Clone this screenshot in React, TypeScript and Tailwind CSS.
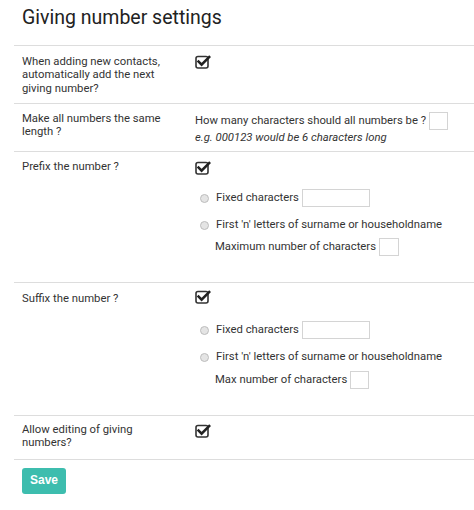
import React from "react";

function CheckIcon() {
  return (
    <svg width="16" height="14" viewBox="0 0 16 14" className="block">
      <rect x="1" y="1.5" width="12" height="11.5" rx="2" fill="none" stroke="#333" strokeWidth="1.6" />
      <path d="M3.6 6.6 L6.6 9.6 L14.2 2" fill="none" stroke="#222" strokeWidth="2.6" strokeLinecap="square" />
    </svg>
  );
}

function Radio() {
  return <span className="inline-block w-[9px] h-[9px] rounded-full border border-[#bdbdbd] bg-[#e4e4e4] shrink-0" />;
}

function Box({ w, h = "h-[18px]" }: { w: string; h?: string }) {
  return <span className={`inline-block border border-[#d4d4d4] bg-white ${w} ${h}`} />;
}

function AffixOptions({ maxLabel, maxBox, firstGap, maxGap }: { maxLabel: string; maxBox: string; firstGap: string; maxGap: string }) {
  return (
    <div className="flex flex-col pl-[5px]">
      <div className="flex items-center gap-[7px] h-[18px]">
        <Radio />
        <span className="flex items-center gap-[3px]">
          Fixed characters <Box w="w-[68px]" />
        </span>
      </div>
      <div className={`flex items-center gap-[7px] h-[14px] ${firstGap}`}>
        <Radio />
        <span>First 'n' letters of surname or householdname</span>
      </div>
      <div className={`flex items-center gap-[3px] h-[18px] pl-[15px] ${maxGap}`}>
        {maxLabel} <Box w={maxBox} />
      </div>
    </div>
  );
}

function Row({ h, label, labelPt, children }: { h: string; label: React.ReactNode; labelPt: string; children: React.ReactNode }) {
  return (
    <div className={`flex border-t border-[#dddddd] ${h}`}>
      <div className={`w-[173px] shrink-0 pl-[8px] pr-[15px] ${labelPt}`}>{label}</div>
      <div className="flex-1 px-[8px]">{children}</div>
    </div>
  );
}

export default function App() {
  return (
    <div
      className="w-[474px] h-[510px] bg-white overflow-hidden pl-[14px] text-[11.3px] leading-[13.3px] text-[#333]"
      style={{ fontFamily: "Roboto, 'Liberation Sans', sans-serif" }}
    >
      <h1 className="pl-[8px] pt-[6px] h-[45px] text-[19.5px] leading-[24px] text-[#222] font-normal">Giving number settings</h1>
      <div className="w-[460px]">
        <Row h="h-[58px]" labelPt="pt-[9px]" label="When adding new contacts, automatically add the next giving number?">
          <div className="pt-[9px]">
            <CheckIcon />
          </div>
        </Row>
        <Row h="h-[48px]" labelPt="pt-[8px]" label="Make all numbers the same length ?">
          <div className="pt-[8px]">
            <div className="flex items-center gap-[3px] h-[18px]">
              How many characters should all numbers be ? <Box w="w-[19px]" />
            </div>
            <div className="italic leading-[14px] mt-[1px]">e.g. 000123 would be 6 characters long</div>
          </div>
        </Row>
        <Row h="h-[131px]" labelPt="pt-[8px]" label="Prefix the number ?">
          <div className="pt-[9px]">
            <CheckIcon />
            <div className="mt-[14px]">
              <AffixOptions maxLabel="Maximum number of characters" maxBox="w-[20px]" firstGap="mt-[11px]" maxGap="mt-[6px]" />
            </div>
          </div>
        </Row>
        <Row h="h-[133px]" labelPt="pt-[9px]" label="Suffix the number ?">
          <div className="pt-[7px]">
            <CheckIcon />
            <div className="mt-[17px]">
              <AffixOptions maxLabel="Max number of characters" maxBox="w-[19px]" firstGap="mt-[11px]" maxGap="mt-[7px]" />
            </div>
          </div>
        </Row>
        <Row h="h-[44px]" labelPt="pt-[7px]" label="Allow editing of giving numbers?">
          <div className="pt-[8px]">
            <CheckIcon />
          </div>
        </Row>
        <div className="border-t border-[#dddddd]" />
      </div>
      <button
        className="ml-[8px] mt-[8px] w-[44px] h-[26px] rounded-[3px] bg-[#3dbdae] text-white text-[12px] font-bold"
        style={{ fontFamily: "'Liberation Sans', Arial, sans-serif" }}
      >
        Save
      </button>
    </div>
  );
}
